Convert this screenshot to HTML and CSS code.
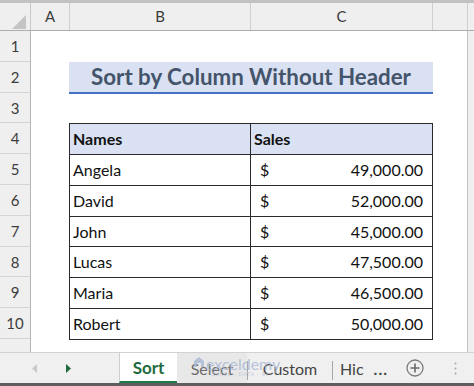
FILE: index.html
```html
<!DOCTYPE html>
<html lang="en">
<head>
    <meta charset="UTF-8">
    <title>Sort by Column Without Header</title>
    <link rel="stylesheet" href="styles.css">
</head>
<body>
    <div class="excel">
        <div class="topbar"></div>
        <div class="colhead">
            <div class="corner">
                <svg width="14" height="14" viewBox="0 0 14 14"><polygon points="14,0 14,14 0,14" fill="#c4c4c4"/></svg>
            </div>
            <div class="ch ch-a">A</div>
            <div class="ch ch-b">B</div>
            <div class="ch ch-c">C</div>
            <div class="ch ch-rest"></div>
        </div>
        <div class="main">
            <div class="rowhead">
                <div class="rh r1">1</div>
                <div class="rh r2">2</div>
                <div class="rh r3">3</div>
                <div class="rh">4</div>
                <div class="rh">5</div>
                <div class="rh">6</div>
                <div class="rh">7</div>
                <div class="rh">8</div>
                <div class="rh">9</div>
                <div class="rh">10</div>
                <div class="rh rh-last"></div>
            </div>
            <div class="sheet">
                <div class="title">Sort by Column Without Header</div>
                <div class="data">
                    <div class="cell head">Names</div>
                    <div class="cell head">Sales</div>
                    <div class="cell">Angela</div>
                    <div class="cell money"><span>$</span><span>49,000.00</span></div>
                    <div class="cell">David</div>
                    <div class="cell money"><span>$</span><span>52,000.00</span></div>
                    <div class="cell">John</div>
                    <div class="cell money"><span>$</span><span>45,000.00</span></div>
                    <div class="cell">Lucas</div>
                    <div class="cell money"><span>$</span><span>47,500.00</span></div>
                    <div class="cell">Maria</div>
                    <div class="cell money"><span>$</span><span>46,500.00</span></div>
                    <div class="cell">Robert</div>
                    <div class="cell money"><span>$</span><span>50,000.00</span></div>
                </div>
            </div>
            <div class="edge"></div>
        </div>
        <div class="tabbar">
            <div class="nav">
                <svg class="arrow" width="5" height="9" viewBox="0 0 5 9"><polygon points="5,0 5,9 0,4.5" fill="#c9c9c9"/></svg>
                <svg class="arrow" width="5" height="9" viewBox="0 0 5 9"><polygon points="0,0 0,9 5,4.5" fill="#1f6b3f"/></svg>
            </div>
            <div class="tab active">Sort</div>
            <div class="tab tab-select">Select</div>
            <span class="sep"></span>
            <div class="tab tab-custom">Custom</div>
            <span class="sep"></span>
            <div class="tab tab-hic">Hic <span class="dots">...</span></div>
            <div class="add">
                <svg width="18" height="18" viewBox="0 0 18 18">
                    <circle cx="9" cy="9" r="8" fill="none" stroke="#7a7a7a" stroke-width="1.3"/>
                    <path d="M9 4.5v9M4.5 9h9" stroke="#6a6a6a" stroke-width="1.6"/>
                </svg>
            </div>
            <div class="more">
                <svg width="3" height="13" viewBox="0 0 3 13">
                    <circle cx="1.5" cy="1.5" r="1" fill="#a8a8a8"/>
                    <circle cx="1.5" cy="6.5" r="1" fill="#a8a8a8"/>
                    <circle cx="1.5" cy="11.5" r="1" fill="#a8a8a8"/>
                </svg>
            </div>
            <div class="watermark">
                <svg width="12" height="12" viewBox="0 0 12 12"><path d="M1 11V5l5-4 5 4v6H8V7H4v4z" fill="#a9b8d4"/></svg>
                <div class="wm-text">
                    <span class="wm-name">exceldemy</span>
                    <span class="wm-sub">EXCEL · DATA · BI</span>
                </div>
            </div>
        </div>
        <div class="footer"></div>
    </div>
</body>
</html>
```

FILE: styles.css
```css
body {
    margin: 0;
    font-family: Lato, "Open Sans", sans-serif;
    background: #fff;
}

.excel {
    width: 474px;
    height: 386px;
    overflow: hidden;
    background: #efefef;
}

.topbar {
    height: 3px;
    background: #c2c2c2;
}

/* column letters */
.colhead {
    display: flex;
    height: 28px;
    box-sizing: border-box;
    border-bottom: 1px solid #adadad;
    background: #efefef;
}

.corner {
    width: 31px;
    box-sizing: border-box;
    border-right: 1px solid #c8c8c8;
    padding: 10px 0 0 12px;
}

.ch {
    box-sizing: border-box;
    border-right: 1px solid #cfcfcf;
    font-size: 15px;
    color: #3c3c3c;
    text-align: center;
    line-height: 27px;
}

.ch-a { width: 39px; }
.ch-b { width: 181px; }
.ch-c { width: 182px; }
.ch-rest { width: 35px; }

.main {
    display: flex;
    height: 321px;
}

/* row numbers */
.rowhead {
    width: 31px;
    box-sizing: border-box;
    border-right: 1px solid #b4b4b4;
    display: flex;
    flex-direction: column;
}

.rh {
    height: 30.8px;
    box-sizing: border-box;
    border-bottom: 1px solid #d4d4d4;
    font-size: 15px;
    color: #3c3c3c;
    text-align: center;
    line-height: 31px;
}

.rh-last {
    flex: 1;
    border-bottom: none;
}

.sheet {
    width: 437px;
    box-sizing: border-box;
    background: #fff;
    border-right: 1px solid #c0c0c0;
    padding: 31px 0 0 38px;
}

.edge {
    flex: 1;
}

.title {
    width: 364px;
    height: 32px;
    box-sizing: border-box;
    background: #d9e1f2;
    border-bottom: 2px solid #4472c4;
    color: #44546a;
    font-weight: bold;
    font-size: 22.3px;
    text-align: center;
    line-height: 30px;
    margin-bottom: 29px;
}

.data {
    display: grid;
    grid-template-columns: 181px 182px;
    grid-auto-rows: 30.85px;
    border-top: 1px solid #2a2a2a;
    border-left: 1px solid #2a2a2a;
    width: 364px;
    box-sizing: border-box;
}

.cell {
    box-sizing: border-box;
    border-right: 1px solid #2a2a2a;
    border-bottom: 1px solid #2a2a2a;
    font-size: 16px;
    color: #111;
    line-height: 30px;
    padding: 0 3px;
}

.cell.head {
    background: #d9e1f2;
    font-weight: bold;
}

.money {
    display: flex;
    justify-content: space-between;
    padding: 0 9px 0 9px;
}

/* sheet tabs */
.tabbar {
    position: relative;
    display: flex;
    align-items: stretch;
    height: 31px;
    box-sizing: border-box;
    border-top: 1px solid #d2d2d2;
    background: #f0f0f0;
}

.nav {
    width: 119px;
    display: flex;
    align-items: center;
    gap: 29px;
    padding-left: 32px;
    box-sizing: border-box;
}

.tab {
    font-size: 16px;
    color: #444;
    display: flex;
    align-items: center;
    justify-content: center;
}

.tab.active {
    width: 58px;
    background: #fff;
    color: #1f6b3f;
    font-weight: bold;
    font-size: 17px;
    border-left: 1px solid #cfcfcf;
    border-bottom: 2px solid #1f7a45;
    box-sizing: border-box;
}

.tab-select {
    width: 70px;
    color: #6b6b6b;
    background: #e8e8e8;
}

.tab-custom {
    width: 84px;
}

.tab-hic {
    width: 64px;
    justify-content: flex-start;
    padding-left: 7px;
    box-sizing: border-box;
}

.dots {
    margin-left: 10px;
    font-weight: bold;
    letter-spacing: 1px;
}

.sep {
    width: 1px;
    height: 19px;
    align-self: center;
    margin-top: 4px;
    background: #a6a6a6;
}

.add {
    width: 44px;
    display: flex;
    align-items: center;
    padding-left: 9px;
    box-sizing: border-box;
}

.more {
    flex: 1;
    display: flex;
    align-items: center;
    padding-left: 13px;
}

.watermark {
    position: absolute;
    left: 193px;
    top: 3px;
    display: flex;
    align-items: flex-start;
    gap: 1px;
    opacity: 0.8;
}

.wm-text {
    display: flex;
    flex-direction: column;
}

.wm-name {
    font-size: 16px;
    color: #a9b8d4;
    line-height: 15px;
}

.wm-sub {
    font-size: 5px;
    color: #b7c2d6;
    letter-spacing: 1px;
    padding-left: 6px;
}

.footer {
    height: 3px;
    background: #5e5e5e;
}
```
